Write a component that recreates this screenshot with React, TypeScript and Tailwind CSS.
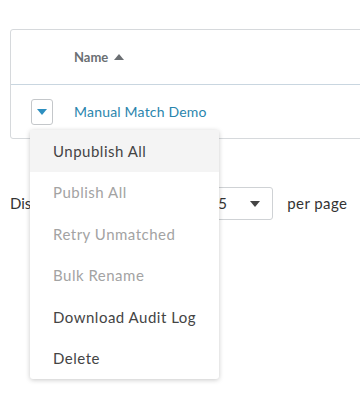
import React from "react";

const items = [
  { label: "Unpublish All", disabled: false, active: true },
  { label: "Publish All", disabled: true },
  { label: "Retry Unmatched", disabled: true },
  { label: "Bulk Rename", disabled: true },
  { label: "Download Audit Log", disabled: false },
  { label: "Delete", disabled: false },
];

export default function App() {
  return (
    <div
      className="relative w-[360px] h-[409px] overflow-hidden bg-white"
      style={{ fontFamily: "Lato, 'Noto Sans', sans-serif" }}
    >
      <div className="pt-[29px] pl-[10px]">
        <div className="w-[400px] border border-[#d6d9dc] rounded-[3px]">
          <div className="h-[55px] flex items-center pl-[63px] border-b border-[#c9d6e0]">
            <span className="text-[13px] font-bold text-[#6b6f73] mt-[1px]">Name</span>
            <svg width="10" height="6" viewBox="0 0 10 6" className="ml-[6px]">
              <path d="M0 6 L5 0 L10 6 Z" fill="#6b6f73" />
            </svg>
          </div>
          <div className="h-[53px] flex items-center pl-[20px]">
            <button className="w-[22px] h-[26px] border border-[#c4c7ca] rounded-[3px] flex items-center justify-center bg-white">
              <svg width="10" height="6" viewBox="0 0 10 6">
                <path d="M0 0 L10 0 L5 6 Z" fill="#2d8fc0" />
              </svg>
            </button>
            <span className="ml-[21px] text-[14px] tracking-[0.2px] text-[#2a85ad]">Manual Match Demo</span>
          </div>
        </div>
      </div>
      <div className="mt-[48px] pl-[10px] flex items-center text-[15px] text-[#333]">
        <span>Display</span>
        <div className="ml-[148px] w-[67px] h-[33px] border border-[#cfd2d5] rounded-[3px] flex items-center pl-[11px] pr-[12px] justify-between">
          <span>5</span>
          <svg width="10" height="6" viewBox="0 0 10 6">
            <path d="M0 0 L10 0 L5 6 Z" fill="#444" />
          </svg>
        </div>
        <span className="ml-[14px] tracking-[0.4px]">per page</span>
      </div>
      <div className="absolute left-[30px] top-[130px] w-[189px] bg-white rounded-[3px] shadow-[0_1px_5px_rgba(0,0,0,0.22)] py-0">
        {items.map((it) => (
          <div
            key={it.label}
            className={
              "h-[41.5px] flex items-center pl-[23px] text-[15px] tracking-[0.5px] " +
              (it.active ? "bg-[#f4f4f4] " : "") +
              (it.disabled ? "text-[#a3a3a3]" : "text-[#444]")
            }
          >
            {it.label}
          </div>
        ))}
      </div>
    </div>
  );
}
